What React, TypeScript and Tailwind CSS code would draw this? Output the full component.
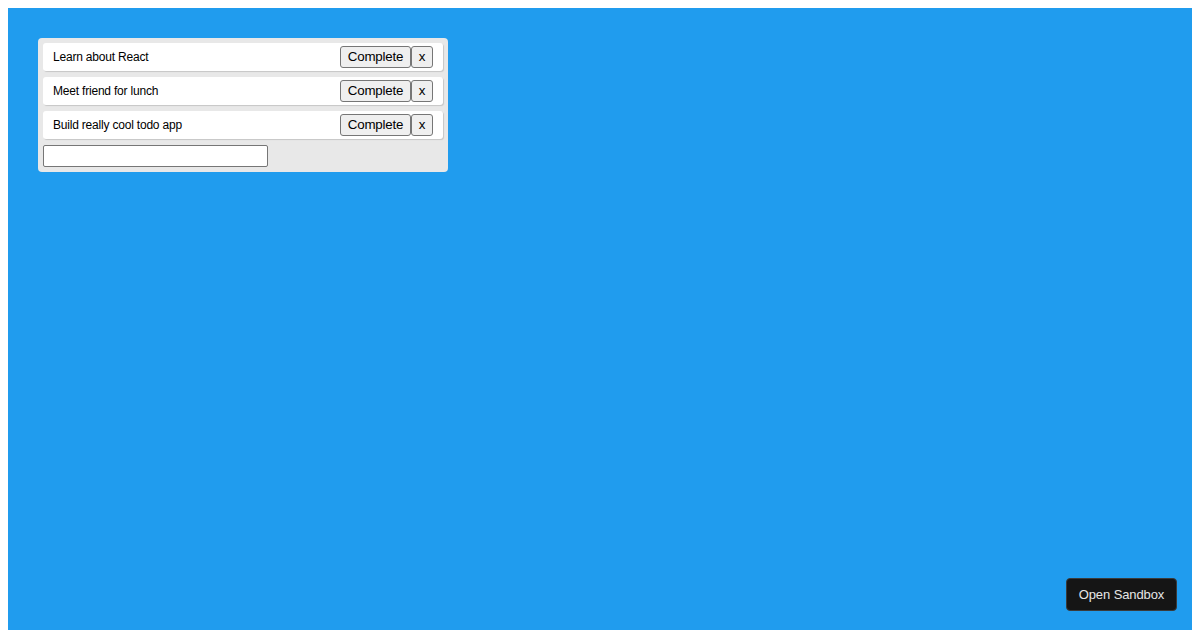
import React from "react";

const todos = ["Learn about React", "Meet friend for lunch", "Build really cool todo app"];

export default function App() {
  return (
    <div className="bg-white p-2 min-h-screen" style={{ fontFamily: '"Liberation Sans", Arial, sans-serif' }}>
      <div className="bg-[#209cee] h-screen p-[30px]">
        <div className="bg-[#e8e8e8] rounded-[4px] p-[5px] max-w-[410px] flex flex-col">
          {todos.map((t) => (
            <div
              key={t}
              className="bg-white rounded-[3px] shadow-[1px_1px_1px_rgba(0,0,0,0.15)] py-[3px] px-[10px] text-[12px] mb-[6px] flex items-center justify-between text-black"
            >
              <span className="tracking-[-0.2px]">{t}</span>
              <div className="flex">
                <button className="bg-[#efefef] border border-[#767676] rounded-[3px] w-[71px] h-[22px] text-[13.33px] leading-[20px] text-black tracking-[-0.2px] flex items-center justify-center">
                  Complete
                </button>
                <button className="bg-[#efefef] border border-[#767676] rounded-[3px] h-[22px] w-[22px] text-[13.33px] leading-[20px] text-black flex items-center justify-center">
                  x
                </button>
              </div>
            </div>
          ))}
          <form>
            <input className="bg-white border border-[#767676] rounded-[2px] w-[225px] h-[22px] px-[2px] text-[13.33px] outline-none block" />
          </form>
        </div>
      </div>
      <button className="fixed right-[23px] bottom-[19px] w-[111px] h-[33px] bg-[#151515] border border-[#3a3a3a] rounded-[4px] text-[13px] text-[#e6e6e6] flex items-center justify-center tracking-[-0.1px]">
        Open Sandbox
      </button>
    </div>
  );
}
